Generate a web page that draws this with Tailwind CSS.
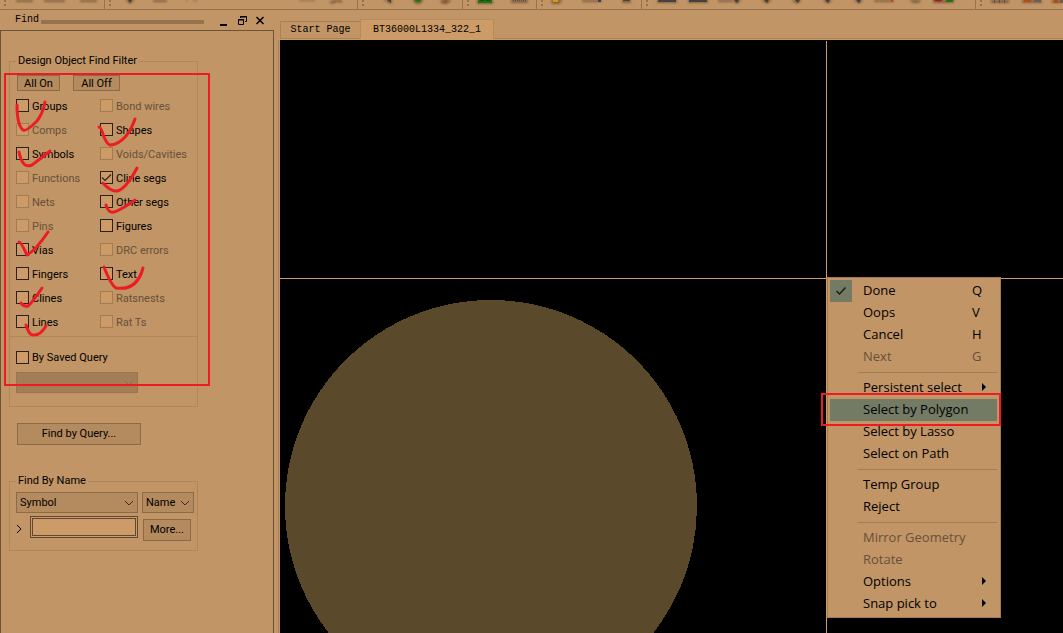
<!DOCTYPE html>
<html lang="en">
  <head>
    <meta charset="UTF-8" />
    <meta name="viewport" content="width=device-width, initial-scale=1.0" />
    <title>BT36000L1334_322_1</title>
    <script src="https://cdn.jsdelivr.net/npm/@tailwindcss/browser@4"></script>
  </head>
  <body class="relative flex h-screen flex-col overflow-hidden bg-[#c19566] font-['Roboto',sans-serif] text-[11px] leading-[14px] text-black">
    <!-- Toolbar -->
    <header class="h-[10px] shrink-0 border-b border-[#96734e]">
      <svg class="h-[9px] w-full" aria-hidden="true">
        <defs>
          <g id="grip" fill="#96734e">
            <rect width="2" height="2" y="0" />
            <rect width="2" height="2" y="4" />
          </g>
          <filter id="soft" x="-50%" y="-200%" width="200%" height="500%"><feGaussianBlur stdDeviation="1" /></filter>
        </defs>
        <g stroke="#96734e">
          <path d="M104.500 0v9M357.500 0v9M462.500 0v9M536.500 0v9M641.500 0v9M975.500 0v9" />
        </g>
        <use href="#grip" x="4" /><use href="#grip" x="109" /><use href="#grip" x="362" /><use href="#grip" x="467" />
        <use href="#grip" x="541" /><use href="#grip" x="646" /><use href="#grip" x="980" />
        <g fill="#80613f" filter="url(#soft)">
          <path d="M16 0h17v2H16zM44 0h21v2H44zM80 0h17v2H80zM125 0h10l-5 4zM153 0h14v2h-14zM186 0h2v1h-2zM193 0h4v1h-4zM299 0h16v1h-16zM329 2l5-2h7l2 3-6-1-5 2zM383 0h10l-2 4zM412 0h12l-4 4h-4zM440 0h12l-5 4h-5zM477 0h16v4h-16zM511 0h17v3h-17zM551 0h12l-4 4h-7zM582 0h20v2h-20zM622 0h9v3h-9zM657 0h20v3h-20zM688 0h20v3h-20zM718 0h14v2h-14zM731 0h11l-5 4zM761 0h11l-5 4zM791 0h11l-5 4zM822 0h11l-5 4zM853 0h11l-5 4zM874 0h20v2h-20zM909 0h13l-4 3h-5zM933 0h21v3h-21zM991 0h18v3h-18zM1022 0h20v3h-20zM1052 0h11v3h-11z" />
        </g>
        <path fill="#44413f" d="M128 0h4l-2 3zM387 0h4v3zM623 0h7v1h-7zM658 0h18v2h-18zM689 0h18v2h-18zM734 0h5l-2 3zM764 0h5l-2 3zM795 0h5l-2 3zM825 0h5l-2 3zM856 0h5l-2 3zM598 0h3v2h-3z" />
        <path fill="#247018" d="M414 0h8q-4 4-8 0zM478 0h14v3h-14zM946 0h8l-2 2h-6z" />
        <path fill="#174d10" d="M480 0h4v1h-4zM486 0h4v1h-4z" />
        <path fill="#a01c1c" d="M933 0h10q-4 3-10 0z" />
        <path fill="#d29a10" d="M553 0h5v2h-5z" />
        <path fill="#b34c1b" d="M444 0h4l-3 2zM891 0h2v2h-2zM1024 0h7v2h-7zM1054 0h4v3h-4z" />
        <path fill="#6b5d53" d="M1034 0h7v2h-7zM1060 0h3v3h-3z" />
        <path stroke="#51525a" d="M513 .5h13" stroke-dasharray="1 1" />
        <path stroke="#51525a" d="M994.500 0v3M999.500 0v3M1004.500 0v3" />
      </svg>
    </header>

    <div class="flex min-h-0 flex-1">
      <!-- Find panel -->
      <aside class="flex w-[274px] shrink-0 flex-col">
        <div class="flex h-5 items-center pr-1 pl-[15px]">
          <h2 class="font-['Liberation_Mono',monospace] text-[10px]">Find</h2>
          <div class="mt-1 ml-0.5 h-1 flex-1 bg-[#96734e]"></div>
          <div class="ml-2.5 flex gap-1">
            <button aria-label="Minimize" class="size-4">
              <svg class="size-4" viewBox="0 0 16 16"><path d="M6 12h7v2H6z" /></svg>
            </button>
            <button aria-label="Restore" class="size-4">
              <svg class="size-4" viewBox="0 0 16 16" fill="none" stroke="#000"><path d="M6.500 6V4.500h6v5H11M6 5h7M4.500 7.500h5v5h-5zM4 8h6" /></svg>
            </button>
            <button aria-label="Close" class="size-4">
              <svg class="size-4" viewBox="0 0 16 16" fill="none" stroke="#000" stroke-width="1.500"><path d="M2.500 5l7 7M9.500 5l-7 7" /></svg>
            </button>
          </div>
        </div>

        <div class="flex flex-1 flex-col items-start border border-b-0 border-[#6b533a] pt-[23px] pl-2">
          <fieldset class="w-[189px] border border-[#af875c]">
            <legend class="ml-1.5 px-0.5">Design Object Find Filter</legend>
            <div class="flex gap-[13px] pt-[7px] pl-[7px]">
              <button class="h-4 w-[43px] border border-[#8b6a48] bg-[#b48a5f] leading-none">All On</button>
              <button class="h-4 w-[47px] border border-[#8b6a48] bg-[#b48a5f] leading-none">All Off</button>
            </div>
            <div class="grid grid-flow-col grid-cols-[84px_auto] grid-rows-[repeat(10,24px)] pt-[3px] pl-1.5 leading-[15px] [&_input]:size-[13px] [&_input]:appearance-none [&_input]:border [&_input]:border-[#2b2118] [&_input]:bg-[#cc9b67] [&_input:disabled]:border-[#a17c55] [&_label]:flex [&_label]:items-start [&_label]:gap-[3px] [&_label]:pt-[5px] [&_label:has(:disabled)]:text-[#68503a]">
              <label><input type="checkbox" />Groups</label>
              <label><input type="checkbox" disabled />Comps</label>
              <label><input type="checkbox" />Symbols</label>
              <label><input type="checkbox" disabled />Functions</label>
              <label><input type="checkbox" disabled />Nets</label>
              <label><input type="checkbox" disabled />Pins</label>
              <label><input type="checkbox" />Vias</label>
              <label><input type="checkbox" />Fingers</label>
              <label><input type="checkbox" />Clines</label>
              <label><input type="checkbox" />Lines</label>
              <label><input type="checkbox" disabled />Bond wires</label>
              <label><input type="checkbox" />Shapes</label>
              <label><input type="checkbox" disabled />Voids/Cavities</label>
              <label class="relative">
                <input type="checkbox" checked />Cline segs
                <svg class="absolute left-0 size-[13px]" viewBox="0 0 13 13" fill="none" stroke="#2b2118" stroke-width="1.200"><path d="M2 6.500l3 3 6-6" /></svg>
              </label>
              <label><input type="checkbox" />Other segs</label>
              <label><input type="checkbox" />Figures</label>
              <label><input type="checkbox" disabled />DRC errors</label>
              <label><input type="checkbox" />Text</label>
              <label><input type="checkbox" disabled />Ratsnests</label>
              <label><input type="checkbox" disabled />Rat Ts</label>
            </div>
            <div class="mt-0.5 border-t border-[#af875c] px-1.5 pt-3.5 pb-[13px]">
              <label class="flex items-start gap-[3px]">
                <input type="checkbox" class="size-[13px] appearance-none border border-[#2b2118] bg-[#cc9b67]" />By Saved Query
              </label>
              <div class="relative mt-[7px] w-[122px]">
                <select disabled aria-label="Saved query" class="block h-[21px] w-full appearance-none border border-[#997550] bg-[#a37d55]"></select>
                <svg class="absolute top-1.5 right-1 size-2.5" viewBox="0 0 10 10" fill="none" stroke="#8b6a48"><path d="M1 3l4 4 4-4" /></svg>
              </div>
            </div>
          </fieldset>

          <button class="mt-4 ml-2 h-[22px] w-[124px] border border-[#8b6a48] bg-[#b48a5f]">Find by Query...</button>

          <fieldset class="mt-[29px] w-[189px] border border-[#af875c]">
            <legend class="ml-1.5 px-0.5">Find By Name</legend>
            <div class="flex gap-1 pt-1 pl-1.5">
              <div class="relative w-[122px]">
                <select aria-label="Object type" class="block h-[21px] w-full appearance-none border border-[#8b6a48] bg-[#b48a5f] px-[3px]">
                  <option>Symbol</option>
                </select>
                <svg class="absolute top-1.5 right-1 size-2.5" viewBox="0 0 10 10" fill="none" stroke="#3b2d1f"><path d="M1 3l4 4 4-4" /></svg>
              </div>
              <div class="relative w-[52px]">
                <select aria-label="Match by" class="block h-[21px] w-full appearance-none border border-[#8b6a48] bg-[#b48a5f] px-[3px]">
                  <option>Name</option>
                </select>
                <svg class="absolute top-1.5 right-1 size-2.5" viewBox="0 0 10 10" fill="none" stroke="#3b2d1f"><path d="M1 3l4 4 4-4" /></svg>
              </div>
            </div>
            <div class="flex items-start pt-[3px] pb-[9px] pl-1.5">
              <svg class="mt-2 mr-2 h-2.5 w-1.5 shrink-0" viewBox="0 0 6 10" fill="none" stroke="#000"><path d="M1 1l4 4-4 4" /></svg>
              <input type="text" aria-label="Name" class="h-[22px] w-[108px] border-3 border-double border-[#5f4932] bg-[#cc9b67] px-1" />
              <button class="mt-[3px] ml-[5px] h-[22px] w-12 border border-[#8b6a48] bg-[#b48a5f]">More...</button>
            </div>
          </fieldset>
        </div>
      </aside>

      <!-- Workspace -->
      <main class="ml-1 flex min-w-0 flex-1 flex-col">
        <nav class="flex h-[30px] shrink-0 items-end border-b border-[#cc9b67] pl-0.5 font-['Liberation_Mono',monospace] text-[10px]">
          <a href="#" class="flex h-[18px] w-20 items-center justify-center border border-r-0 border-[#a98258]">Start Page</a>
          <a href="#" class="flex h-5 w-[134px] items-center justify-center border border-b-0 border-[#b48a5f] bg-[#cc9b67]">BT36000L1334_322_1</a>
          <div class="flex-1 border-b border-[#a98258]"></div>
        </nav>
        <div class="relative flex-1 border-l border-[#a98258] bg-black">
          <svg class="absolute inset-0 size-full border-l border-[#c19566]" role="img" aria-label="Board canvas">
            <circle cx="211" cy="466" r="206" fill="#5a4a2b" shape-rendering="crispEdges" />
            <path d="M546.500 1v1600M0 238.500h2600" stroke="#cc9b67" />
          </svg>

          <ul role="menu" class="absolute top-[237px] left-[548px] w-[174px] border border-[#a17c55] bg-[#c19566] py-0.5 pr-[3px] pl-0.5 font-['Open_Sans',sans-serif] text-[13px] [&_button]:flex [&_button]:h-[22px] [&_button]:w-full [&_button]:items-center [&_button]:pb-0.5 [&_button]:pl-[33px] [&_button]:text-left [&_button:disabled]:text-[#68503a] [&_hr]:my-1 [&_hr]:ml-7 [&_hr]:border-[#a17c55] [&_kbd]:w-[25px] [&_kbd]:font-['Open_Sans',sans-serif] [&_kbd]:text-[13px] [&_span]:flex-1">
            <li class="relative">
              <div class="absolute left-0 flex size-[22px] items-center justify-center bg-[#737b64]">
                <svg class="size-3" viewBox="0 0 12 12" fill="none" stroke="#1f1a14" stroke-width="1.500"><path d="M1.500 6l3 3 6-6.500" /></svg>
              </div>
              <button><span>Done</span><kbd>Q</kbd></button>
            </li>
            <li><button><span>Oops</span><kbd>V</kbd></button></li>
            <li><button><span>Cancel</span><kbd>H</kbd></button></li>
            <li><button disabled><span>Next</span><kbd>G</kbd></button></li>
            <li><hr /></li>
            <li><button><span>Persistent select</span><svg class="mr-[11px] h-2 w-1" viewBox="0 0 4 8"><path d="M0 0l4 4-4 4z" /></svg></button></li>
            <li class="bg-[#737b64]"><button><span>Select by Polygon</span></button></li>
            <li><button><span>Select by Lasso</span></button></li>
            <li><button><span>Select on Path</span></button></li>
            <li><hr /></li>
            <li><button><span>Temp Group</span></button></li>
            <li><button><span>Reject</span></button></li>
            <li><hr /></li>
            <li><button disabled><span>Mirror Geometry</span></button></li>
            <li><button disabled><span>Rotate</span></button></li>
            <li><button><span>Options</span><svg class="mr-[11px] h-2 w-1" viewBox="0 0 4 8"><path d="M0 0l4 4-4 4z" /></svg></button></li>
            <li><button><span>Snap pick to</span><svg class="mr-[11px] h-2 w-1" viewBox="0 0 4 8"><path d="M0 0l4 4-4 4z" /></svg></button></li>
          </ul>
        </div>
      </main>
    </div>

    <!-- Red pen annotations -->
    <svg class="pointer-events-none absolute inset-0 size-full" fill="none" stroke="#ed1c24" stroke-width="2" aria-hidden="true">
      <path d="M5 74h204v311H5zM822 394h178v31H822z" />
      <g stroke-width="3" stroke-linecap="round" stroke-linejoin="round">
        <path d="M17 105q0 20 6 25q3 2 14-9q6-8 8-19" />
        <path d="M99 127q2 0 5 10q3 7 6 8q8 0 16-9q5-6 9-17" />
        <path d="M19 152q2 9 5 12t8 1q8-6 18-14" />
        <path d="M103 183q8 9 14 8q9-2 20-23" />
        <path d="M106 205q2 6 5 7q4 2 24-12" />
        <path d="M19 242q2 0 8 13q9-5 21-23" />
        <path d="M104 267q7 18 12 21q21 3 27-20" />
        <path d="M21 303q3 4 7 3q4-3 14-18" />
        <path d="M26 325q3 10 7 10q7 1 13-9" />
      </g>
    </svg>
  </body>
</html>
